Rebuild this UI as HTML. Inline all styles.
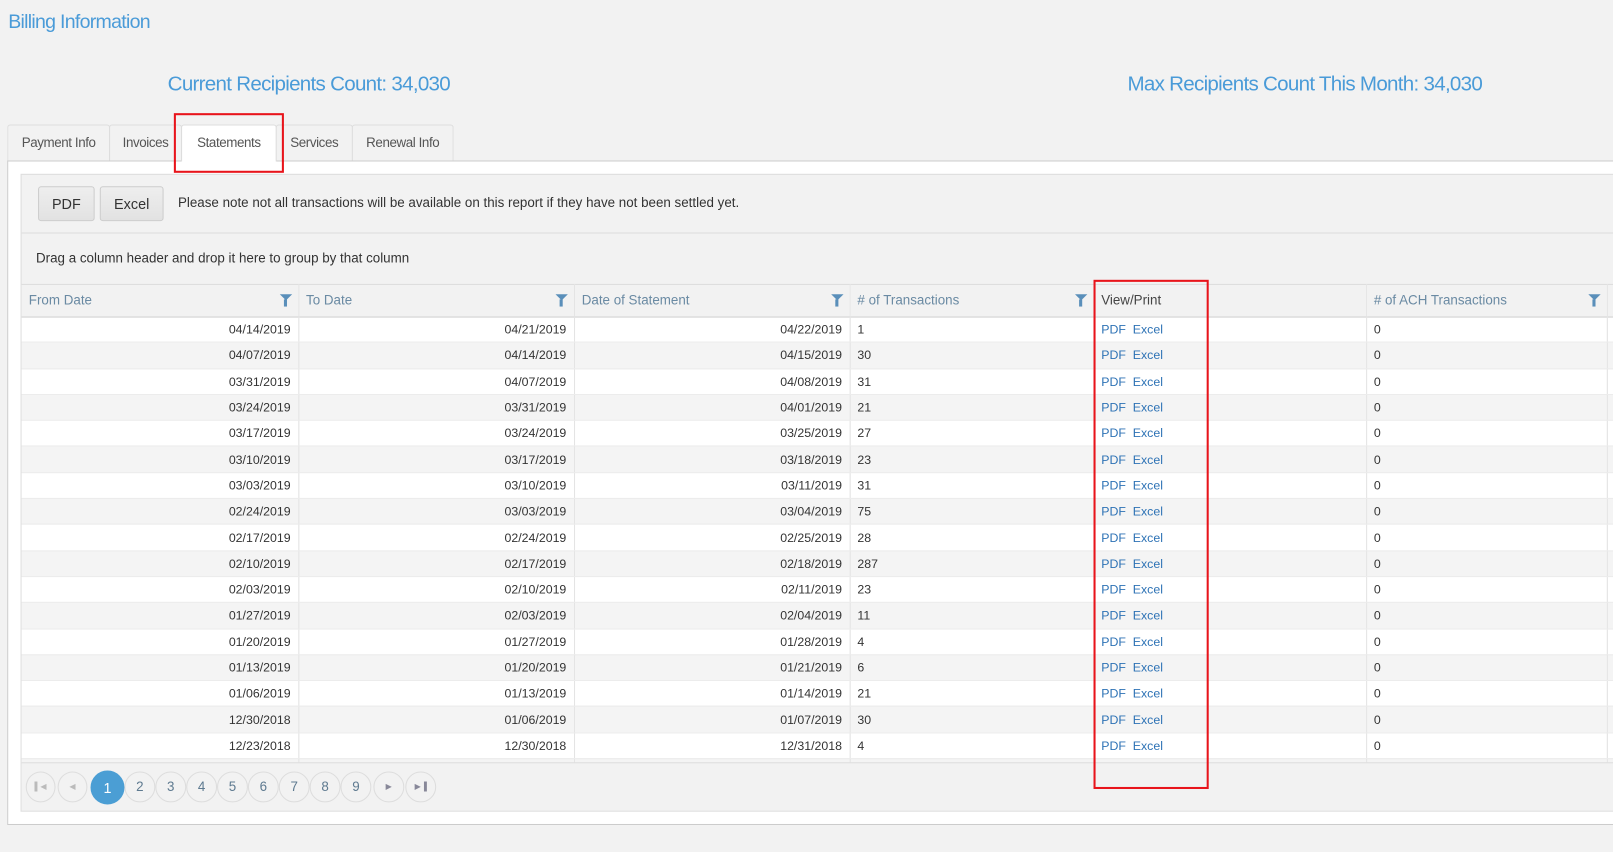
<!DOCTYPE html>
<html><head><meta charset="utf-8"><style>
*{box-sizing:border-box;margin:0;padding:0}
body{width:1613px;height:851px;background:#f2f2f2;font-family:"Liberation Sans",Arial,sans-serif;position:relative;overflow:hidden;color:#333}
#w{position:absolute;left:0;top:0;width:1568px;height:828px;transform:scale(1.0287);transform-origin:0 0}
.a{position:absolute;white-space:nowrap}
.blue{color:#4a9bd8;letter-spacing:-0.7px}
.tab{position:absolute;top:121px;height:35px;border:1px solid #ddd;border-bottom:none;background:#f2f2f2;font-size:13px;color:#555;text-align:center;line-height:34px;letter-spacing:-0.4px;border-radius:3px 3px 0 0}
.panel{position:absolute;left:7px;top:156px;width:1620px;height:646px;background:#fff;border:1px solid #ccc}
.grid{position:absolute;left:20px;top:169px;width:1610px;height:620px;background:#f2f2f2;border:1px solid #ddd}
.btn{position:absolute;top:181px;height:34px;border:1px solid #ccc;border-radius:3px;background:linear-gradient(#eee,#e2e2e2);font-size:14px;line-height:33px;text-align:center;color:#333}
table{position:absolute;left:21px;top:276px;width:1601px;border-collapse:collapse;font-size:12px;table-layout:fixed}
td,th{border-right:1px solid #e4e4e4;height:25.3px;padding:0 7px;white-space:nowrap;overflow:hidden}
th{height:31px;text-align:left;font-weight:normal;color:#6a8aa3;font-size:13px;border-top:1px solid #ddd;border-bottom:2px solid #e2e2e2;background:#f2f2f2;position:relative}
td{border-bottom:1px solid #ececec}
tr:nth-child(even) td{background:#fff}
tr:nth-child(odd) td{background:#f4f4f4}
.r{text-align:right}
.lk{color:#2d72b5}
.f{position:absolute;right:6px;top:9px;width:0;height:0;border-left:6px solid transparent;border-right:6px solid transparent;border-top:6px solid #5a8fba}
.f:after{content:"";position:absolute;left:-1.5px;top:-1px;width:3px;height:7px;background:#5a8fba}
.pg{position:absolute;top:750px;width:30px;height:30px;border:1px solid #ddd;border-radius:50%;font-size:13px;line-height:28px;text-align:center;color:#5e7a90;background:#f2f2f2}
.red{position:absolute;border:2px solid #e8141b}
</style></head><body><div id="w">
<div class="a blue" style="left:8px;top:11px;font-size:19px">Billing Information</div>
<div class="a blue" style="left:163px;top:71px;font-size:20px">Current Recipients Count: 34,030</div>
<div class="a blue" style="left:1096px;top:71px;font-size:20px">Max Recipients Count This Month: 34,030</div>

<div class="panel"></div>
<div class="tab" style="left:7px;width:100px">Payment Info</div>
<div class="tab" style="left:106px;width:71px">Invoices</div>
<div class="tab" style="left:176px;width:93px;background:#fff;height:36px">Statements</div>
<div class="tab" style="left:268px;width:75px">Services</div>
<div class="tab" style="left:342px;width:99px">Renewal Info</div>

<div class="grid"></div>
<div class="btn" style="left:37px;width:55px">PDF</div>
<div class="btn" style="left:97px;width:62px">Excel</div>
<div class="a" style="left:173px;top:189px;font-size:13px">Please note not all transactions will be available on this report if they have not been settled yet.</div>
<div class="a" style="left:21px;top:226px;width:1600px;border-top:1px solid #ddd"></div>
<div class="a" style="left:35px;top:243px;font-size:13px">Drag a column header and drop it here to group by that column</div>

<table>
<colgroup><col style="width:269px"><col style="width:268px"><col style="width:268px"><col style="width:237px"><col style="width:265px"><col style="width:234px"><col style="width:60px"></colgroup>
<tr><th>From Date<span class="f"></span></th><th>To Date<span class="f"></span></th><th>Date of Statement<span class="f"></span></th><th># of Transactions<span class="f"></span></th><th style="color:#444">View/Print</th><th># of ACH Transactions<span class="f"></span></th><th></th></tr>
<tr><td class="r">04/14/2019</td><td class="r">04/21/2019</td><td class="r">04/22/2019</td><td>1</td><td class="lk">PDF&nbsp; Excel</td><td>0</td><td></td></tr>
<tr><td class="r">04/07/2019</td><td class="r">04/14/2019</td><td class="r">04/15/2019</td><td>30</td><td class="lk">PDF&nbsp; Excel</td><td>0</td><td></td></tr>
<tr><td class="r">03/31/2019</td><td class="r">04/07/2019</td><td class="r">04/08/2019</td><td>31</td><td class="lk">PDF&nbsp; Excel</td><td>0</td><td></td></tr>
<tr><td class="r">03/24/2019</td><td class="r">03/31/2019</td><td class="r">04/01/2019</td><td>21</td><td class="lk">PDF&nbsp; Excel</td><td>0</td><td></td></tr>
<tr><td class="r">03/17/2019</td><td class="r">03/24/2019</td><td class="r">03/25/2019</td><td>27</td><td class="lk">PDF&nbsp; Excel</td><td>0</td><td></td></tr>
<tr><td class="r">03/10/2019</td><td class="r">03/17/2019</td><td class="r">03/18/2019</td><td>23</td><td class="lk">PDF&nbsp; Excel</td><td>0</td><td></td></tr>
<tr><td class="r">03/03/2019</td><td class="r">03/10/2019</td><td class="r">03/11/2019</td><td>31</td><td class="lk">PDF&nbsp; Excel</td><td>0</td><td></td></tr>
<tr><td class="r">02/24/2019</td><td class="r">03/03/2019</td><td class="r">03/04/2019</td><td>75</td><td class="lk">PDF&nbsp; Excel</td><td>0</td><td></td></tr>
<tr><td class="r">02/17/2019</td><td class="r">02/24/2019</td><td class="r">02/25/2019</td><td>28</td><td class="lk">PDF&nbsp; Excel</td><td>0</td><td></td></tr>
<tr><td class="r">02/10/2019</td><td class="r">02/17/2019</td><td class="r">02/18/2019</td><td>287</td><td class="lk">PDF&nbsp; Excel</td><td>0</td><td></td></tr>
<tr><td class="r">02/03/2019</td><td class="r">02/10/2019</td><td class="r">02/11/2019</td><td>23</td><td class="lk">PDF&nbsp; Excel</td><td>0</td><td></td></tr>
<tr><td class="r">01/27/2019</td><td class="r">02/03/2019</td><td class="r">02/04/2019</td><td>11</td><td class="lk">PDF&nbsp; Excel</td><td>0</td><td></td></tr>
<tr><td class="r">01/20/2019</td><td class="r">01/27/2019</td><td class="r">01/28/2019</td><td>4</td><td class="lk">PDF&nbsp; Excel</td><td>0</td><td></td></tr>
<tr><td class="r">01/13/2019</td><td class="r">01/20/2019</td><td class="r">01/21/2019</td><td>6</td><td class="lk">PDF&nbsp; Excel</td><td>0</td><td></td></tr>
<tr><td class="r">01/06/2019</td><td class="r">01/13/2019</td><td class="r">01/14/2019</td><td>21</td><td class="lk">PDF&nbsp; Excel</td><td>0</td><td></td></tr>
<tr><td class="r">12/30/2018</td><td class="r">01/06/2019</td><td class="r">01/07/2019</td><td>30</td><td class="lk">PDF&nbsp; Excel</td><td>0</td><td></td></tr>
<tr><td class="r">12/23/2018</td><td class="r">12/30/2018</td><td class="r">12/31/2018</td><td>4</td><td class="lk">PDF&nbsp; Excel</td><td>0</td><td></td></tr>
<tr><td style="height:5px"></td><td></td><td></td><td></td><td></td><td></td><td></td></tr>
</table>
<div class="a" style="left:21px;top:741px;width:1600px;height:47px;background:#f2f2f2;border-top:1px solid #ddd"></div>
<div class="pg" style="left:25px;width:29px;font-size:8px;color:#bbb">&#9612;&#9664;</div>
<div class="pg" style="left:56px;width:29px;font-size:8px;color:#bbb">&#9664;</div>
<div class="pg" style="left:88px;width:33px;height:33px;top:749px;background:#4b9ed4;border-color:#4b9ed4;color:#fff;line-height:33px;font-size:14px">1</div>
<div class="pg" style="left:121px">2</div>
<div class="pg" style="left:151px">3</div>
<div class="pg" style="left:181px">4</div>
<div class="pg" style="left:211px">5</div>
<div class="pg" style="left:241px">6</div>
<div class="pg" style="left:271px">7</div>
<div class="pg" style="left:301px">8</div>
<div class="pg" style="left:331px">9</div>
<div class="pg" style="left:363px;font-size:8px;color:#889">&#9654;</div>
<div class="pg" style="left:394px;font-size:8px;color:#889">&#9654;&#9616;</div>

<div class="red" style="left:169px;top:110px;width:107px;height:58px"></div>
<div class="red" style="left:1063px;top:272px;width:112px;height:495px"></div>
</div></body></html>
